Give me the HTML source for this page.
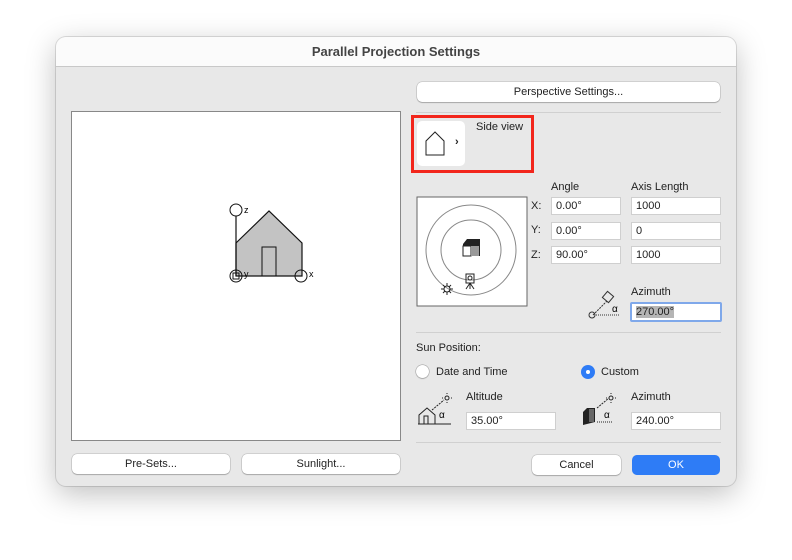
<!DOCTYPE html><html><head><style>
body{margin:0;width:792px;height:560px;background:#fff;font-family:"Liberation Sans",sans-serif;font-size:11px;color:#222;position:relative;overflow:hidden}
.a{position:absolute}
.win{left:56px;top:37px;width:680px;height:449px;background:#e8e8e8;border-radius:10px;box-shadow:0 8px 30px rgba(0,0,0,.25),0 0 0 1px rgba(0,0,0,.12);overflow:hidden}
.tb{left:0;top:0;width:680px;height:29px;background:#fbfbfb;border-bottom:1px solid #c8c8c8;text-align:center;line-height:29px;font-weight:bold;font-size:13px;color:#444}
.btn{position:absolute;background:#fff;border-radius:5px;box-shadow:0 0 0 .5px rgba(0,0,0,.2),0 1px 1px rgba(0,0,0,.2);text-align:center;line-height:20px;height:20px;font-size:11px}
.in{position:absolute;background:#fff;border:1px solid #cfcfcf;height:16px;line-height:16px;padding-left:4px;box-sizing:content-box;font-size:11px}
.sep{position:absolute;height:1px;background:#d0d0d0}
</style></head><body>
<div class="a win">
<div class="a tb">Parallel Projection Settings</div>
</div>
<div class="a" style="left:71px;top:111px;width:328px;height:328px;background:#fff;border:1px solid #888"></div>
<svg class="a" style="left:0;top:0" width="792" height="560">
<polygon points="236,243 269,211 302,243 302,276 236,276" fill="#c3c3c3" stroke="#111" stroke-width="1.2"/>
<line x1="236" y1="216" x2="236" y2="276" stroke="#111" stroke-width="1.2"/>
<rect x="262" y="247" width="14" height="29" fill="none" stroke="#111"/>
<circle cx="236" cy="210" r="6" fill="none" stroke="#111"/>
<circle cx="236" cy="276" r="6" fill="none" stroke="#111"/>
<rect x="233" y="273" width="6" height="6" fill="none" stroke="#111"/>
<circle cx="301" cy="276" r="6" fill="none" stroke="#111"/>
<text x="244" y="213" font-size="9" font-family="Liberation Sans">z</text>
<text x="244" y="277" font-size="9" font-family="Liberation Sans">y</text>
<text x="309" y="277" font-size="9" font-family="Liberation Sans">x</text>
<rect x="417" y="197" width="110" height="109" fill="#fff" stroke="#666"/>
<circle cx="471" cy="250" r="45" fill="none" stroke="#888"/>
<circle cx="471" cy="250" r="30" fill="none" stroke="#888"/>
<polygon points="463,244 467,239 480,239 480,256 463,256" fill="#222"/>
<rect x="463" y="246" width="8" height="10" fill="#fff" stroke="#222"/>
<rect x="471" y="246" width="8" height="10" fill="#999"/>
<rect x="466" y="274" width="8" height="9" fill="none" stroke="#222"/>
<circle cx="470" cy="278" r="2" fill="none" stroke="#222"/>
<path d="M470 283 L466 289 M470 283 L474 289 M470 283 V289" stroke="#222"/>
<circle cx="447" cy="289" r="3" fill="none" stroke="#222"/>
<path d="M441 289h3M450 289h3M447 283v3M447 292v3M443 285l2 2M451 285l-2 2M443 293l2-2M451 293l-2-2" stroke="#222"/>
<path d="M593 315 L607 301" stroke="#333" stroke-dasharray="2 1"/><circle cx="592" cy="315" r="3" fill="none" stroke="#333"/>
<rect x="604" y="293" width="8" height="8" fill="none" stroke="#333" transform="rotate(40 608 297)"/>
<path d="M596 315h24" stroke="#333" stroke-dasharray="1 1"/><text x="612" y="312" font-size="10">α</text>
<path d="M418 424h33" stroke="#222"/><path d="M419 424v-9l8-7 8 7v9" fill="none" stroke="#222"/><rect x="424" y="416" width="4" height="8" fill="none" stroke="#222"/>
<path d="M432 410l12-10" stroke="#222" stroke-dasharray="2 1"/><text x="439" y="418" font-size="10">α</text>
<circle cx="447" cy="398" r="2" fill="none" stroke="#222"/><path d="M443 398h-1M451 398h1M447 394v-1M447 402v1" stroke="#222"/>
<polygon points="583,412 587,408 595,408 595,422 583,425" fill="#222"/><rect x="589" y="409" width="5" height="13" fill="#666"/>
<path d="M597 422h16" stroke="#222" stroke-dasharray="1 1"/><path d="M597 408l12-10" stroke="#222" stroke-dasharray="2 1"/><text x="604" y="418" font-size="10">α</text>
<circle cx="611" cy="398" r="2" fill="none" stroke="#222"/><path d="M607 398h-1M615 398h1M611 394v-1M611 402v1" stroke="#222"/>
</svg>
<div class="btn" style="left:417px;top:82px;width:303px">Perspective Settings...</div>
<div class="sep" style="left:416px;top:112px;width:305px"></div>
<div class="a" style="left:411px;top:115px;width:117px;height:52px;border:3px solid #f2261c"></div>
<div class="a" style="left:417px;top:121px;width:48px;height:45px;background:#fff;border-radius:5px"></div>
<svg class="a" style="left:425px;top:131px" width="20" height="25"><path d="M1 10 L10 1 L19 10 V24 H1 Z" fill="none" stroke="#222"/></svg>
<div class="a" style="left:455px;top:136px;font-weight:bold;font-size:11px">›</div>
<div class="a" style="left:476px;top:121px">Side view</div>
<div class="a" style="left:551px;top:181px">Angle</div>
<div class="a" style="left:631px;top:181px">Axis Length</div>
<div class="a" style="left:531px;top:200px">X:</div><div class="a" style="left:531px;top:224px">Y:</div><div class="a" style="left:531px;top:249px">Z:</div>
<div class="in" style="left:551px;top:197px;width:64px">0.00°</div>
<div class="in" style="left:551px;top:222px;width:64px">0.00°</div>
<div class="in" style="left:551px;top:246px;width:64px">90.00°</div>
<div class="in" style="left:631px;top:197px;width:84px">1000</div>
<div class="in" style="left:631px;top:222px;width:84px">0</div>
<div class="in" style="left:631px;top:246px;width:84px">1000</div>
<div class="a" style="left:631px;top:286px">Azimuth</div>
<div class="in" style="left:630px;top:302px;width:84px;border:2px solid #7fa8ea;border-radius:2px"><span style="background:#b5b5b5">270.00°</span></div>
<div class="sep" style="left:416px;top:332px;width:305px"></div>
<div class="a" style="left:416px;top:342px">Sun Position:</div>
<div class="a" style="left:416px;top:365px;width:13px;height:13px;border-radius:50%;background:#fff;box-shadow:0 0 0 .5px #999,0 1px 1px rgba(0,0,0,.2)"></div>
<div class="a" style="left:436px;top:366px">Date and Time</div>
<div class="a" style="left:581px;top:365px;width:14px;height:14px;border-radius:50%;background:#2e7cf6"></div>
<div class="a" style="left:586px;top:370px;width:4px;height:4px;border-radius:50%;background:#fff"></div>
<div class="a" style="left:601px;top:366px">Custom</div>
<div class="a" style="left:466px;top:391px">Altitude</div>
<div class="in" style="left:466px;top:412px;width:84px">35.00°</div>
<div class="a" style="left:631px;top:391px">Azimuth</div>
<div class="in" style="left:631px;top:412px;width:84px">240.00°</div>
<div class="sep" style="left:416px;top:442px;width:305px"></div>
<div class="btn" style="left:72px;top:454px;width:158px">Pre-Sets...</div>
<div class="btn" style="left:242px;top:454px;width:158px">Sunlight...</div>
<div class="btn" style="left:532px;top:455px;width:89px">Cancel</div>
<div class="btn" style="left:632px;top:455px;width:88px;background:#2e7cf6;color:#fff;box-shadow:none">OK</div>
</body></html>
